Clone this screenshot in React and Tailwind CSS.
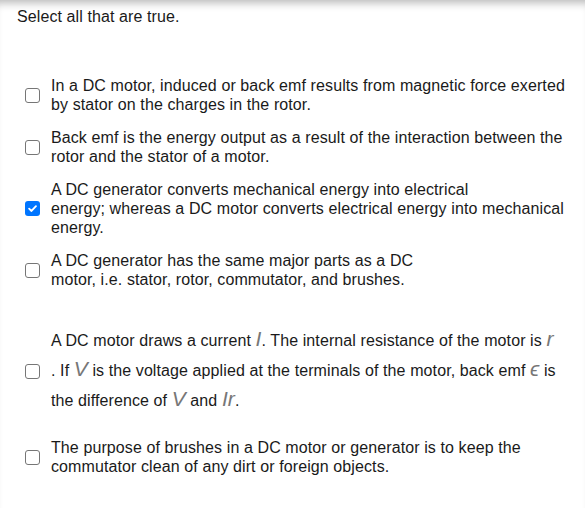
import { useState } from 'react';

function Box({ checked }) {
    if (checked) {
        return (
            <span className="w-[15px] h-[15px] rounded-[3px] bg-[#0075ff] flex items-center justify-center">
                <svg width="11" height="11" viewBox="0 0 12 12">
                    <path d="M2.3 6.2 L4.9 8.7 L9.8 3.4" fill="none" stroke="white" strokeWidth="2" strokeLinecap="round" strokeLinejoin="round" />
                </svg>
            </span>
        );
    }
    return <span className="w-[15px] h-[15px] rounded-[3px] border border-[#767676] bg-white block" />;
}

function Option({ checked, children, className = '' }) {
    return (
        <div className={'flex items-center ' + className}>
            <div className="w-[51px] pl-[25px] shrink-0">
                <Box checked={checked} />
            </div>
            <div className="pr-[12px]">{children}</div>
        </div>
    );
}

function M({ children }) {
    return <span className="italic text-[21px] text-[#777] leading-none">{children}</span>;
}

export default function App() {
    const [sel] = useState([false, false, true, false, false, false]);

    return (
        <div
            className="w-[585px] h-[508px] bg-white text-[#1a1a1a] pt-2 tracking-[0.1px] shadow-[inset_0_9px_8px_-6px_rgba(0,0,0,0.28)]"
            style={{ fontFamily: '"Liberation Sans", Arial, sans-serif' }}
        >
            <p className="pl-[17px] text-[16px] leading-[18px]">Select all that are true.</p>

            <div className="mt-[50px] text-[16px] leading-[19px]">
                <Option checked={sel[0]}>
                    In a DC motor, induced or back emf results from magnetic force exerted by stator on the charges in the rotor.
                </Option>
                <Option checked={sel[1]} className="mt-[14px]">
                    Back emf is the energy output as a result of the interaction between the rotor and the stator of a motor.
                </Option>
                <Option checked={sel[2]} className="mt-[14px]">
                    <span className="block">
                        A DC generator converts mechanical energy into electrical
                        <br />
                        energy; whereas a DC motor converts electrical energy into mechanical energy.
                    </span>
                </Option>
                <Option checked={sel[3]} className="mt-[14px]">
                    <span className="block">
                        A DC generator has the same major parts as a DC
                        <br />
                        motor, i.e. stator, rotor, commutator, and brushes.
                    </span>
                </Option>
                <Option checked={sel[4]} className="mt-[37px]">
                    <div className="leading-[30px]">
                        A DC motor draws a current <M>I</M>. The internal resistance of the motor is <M>r</M>
                        <br />
                        . If <M>V</M> is the voltage applied at the terminals of the motor, back emf <M>ϵ</M> is
                        <br />
                        the difference of <M>V</M> and <M>Ir</M>.
                    </div>
                </Option>
                <Option checked={sel[5]} className="mt-[22px]">
                    The purpose of brushes in a DC motor or generator is to keep the commutator clean of any dirt or foreign objects.
                </Option>
            </div>
        </div>
    );
}
